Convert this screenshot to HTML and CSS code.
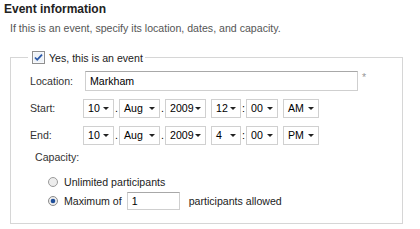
FILE: index.html
```html
<!DOCTYPE html>
<html lang="en">
<head>
    <meta charset="UTF-8">
    <title>Event information</title>
    <link rel="stylesheet" href="styles.css">
</head>
<body>
    <div class="section">
        <h2>Event information</h2>
        <p class="hint">If this is an event, specify its location, dates, and capacity.</p>

        <fieldset class="event-box">
            <legend>
                <label class="check">
                    <svg class="checkbox" width="13" height="13" viewBox="0 0 13 13">
                        <rect x="0.5" y="0.5" width="12" height="12" fill="#fff" stroke="#8f8f8f"/>
                        <rect x="1.5" y="1.5" width="10" height="10" fill="#eef2f7"/>
                        <path d="M3 6.5 L5.2 8.8 L10 3.6" fill="none" stroke="#2a58a8" stroke-width="1.8"/>
                    </svg>
                    Yes, this is an event
                </label>
            </legend>

            <div class="row">
                <span class="label">Location:</span>
                <input class="text location" type="text" value="Markham">
                <span class="required">*</span>
            </div>

            <div class="row">
                <span class="label">Start:</span>
                <span class="dropdown w-day">10</span><span class="sep">.</span>
                <span class="dropdown w-month">Aug</span><span class="sep">.</span>
                <span class="dropdown w-year">2009</span>
                <span class="dropdown w-hour">12</span><span class="sep">:</span>
                <span class="dropdown w-min">00</span>
                <span class="dropdown w-ampm">AM</span>
            </div>

            <div class="row">
                <span class="label">End:</span>
                <span class="dropdown w-day">10</span><span class="sep">.</span>
                <span class="dropdown w-month">Aug</span><span class="sep">.</span>
                <span class="dropdown w-year">2009</span>
                <span class="dropdown w-hour">4</span><span class="sep">:</span>
                <span class="dropdown w-min">00</span>
                <span class="dropdown w-ampm">PM</span>
            </div>

            <div class="capacity">
                <div class="cap-title">Capacity:</div>
                <label class="option">
                    <svg class="radio" width="10" height="10" viewBox="0 0 10 10">
                        <circle cx="5" cy="5" r="4.5" fill="#ededed" stroke="#9a9a9a"/>
                    </svg>
                    Unlimited participants
                </label>
                <label class="option">
                    <svg class="radio" width="10" height="10" viewBox="0 0 10 10">
                        <circle cx="5" cy="5" r="4.5" fill="#ededed" stroke="#8a8a8a"/>
                        <circle cx="5" cy="5" r="2.3" fill="#1f4f9a"/>
                    </svg>
                    Maximum of
                    <input class="text max" type="text" value="1">
                    participants allowed
                </label>
            </div>
        </fieldset>
    </div>
</body>
</html>
```

FILE: styles.css
```css
body {
    margin: 0;
    background: #fff;
    font-family: 'Liberation Sans', Arial, sans-serif;
    font-size: 10.6px;
    color: #333;
}

.section {
    width: 399px;
    padding: 2px 0 0 4px;
}

h2 {
    margin: 0;
    font-size: 12px;
    line-height: 14px;
    font-weight: bold;
    color: #222;
}

.hint {
    margin: 6px 0 0 6px;
    line-height: 13px;
    color: #555;
}

.event-box {
    margin: 16px 0 0 6px;
    padding: 7px 0 13px 19px;
    border: 1px solid #d6d6d6;
    min-width: 0;
}

.event-box legend {
    margin-left: -2px;
    padding: 0 2px 0 4px;
}

.check {
    display: flex;
    align-items: center;
    gap: 4px;
    color: #222;
}

.row {
    display: flex;
    align-items: center;
    height: 20px;
}

.row + .row {
    margin-top: 7px;
}

.label {
    width: 55px;
    color: #333;
}

.text {
    box-sizing: border-box;
    height: 20px;
    margin: 0;
    padding: 1px 4px;
    border: 1px solid #cfcfcf;
    border-top-color: #a8a8a8;
    font: inherit;
    color: #000;
    outline: none;
}

.location {
    width: 273px;
}

.required {
    align-self: flex-start;
    margin-left: 4px;
    color: #999;
}

.dropdown {
    position: relative;
    box-sizing: border-box;
    height: 19px;
    line-height: 17px;
    padding-left: 4px;
    border: 1px solid #d0d0d0;
    color: #000;
}

.dropdown::after {
    content: "";
    position: absolute;
    right: 4px;
    top: 7px;
    border-left: 3px solid transparent;
    border-right: 3px solid transparent;
    border-top: 3px solid #222;
}

.sep {
    width: 5px;
    text-align: center;
    color: #000;
}

.w-day { width: 31px; margin-left: -2px; }
.w-month { width: 41px; }
.w-year { width: 41px; }
.w-hour { width: 30px; margin-left: 5px; }
.w-min { width: 32px; }
.w-ampm { width: 36px; margin-left: 5px; }

.capacity {
    padding: 6px 0 0 5px;
}

.cap-title {
    line-height: 13px;
    margin-bottom: 8px;
}

.option {
    display: flex;
    align-items: center;
    gap: 6px;
    height: 19px;
    margin-left: 13px;
    color: #222;
}

.max {
    width: 53px;
    height: 18px;
    margin: 0 3px 0 -1px;
}
```
